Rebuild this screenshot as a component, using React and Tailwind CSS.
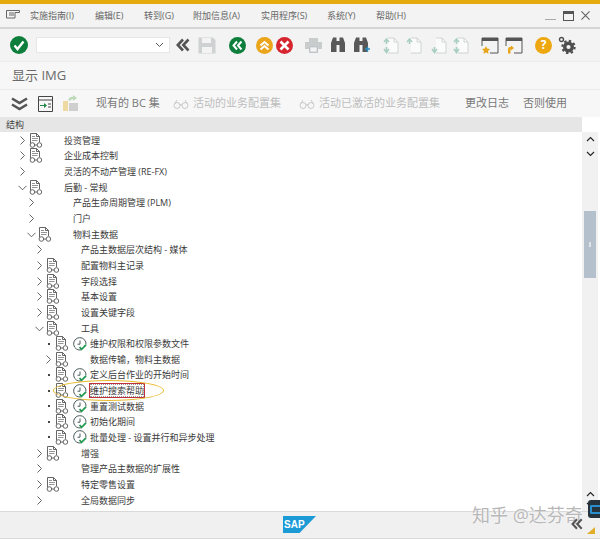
import React from "react";

const Chev = ({ open }) => (
  <svg width="9" height="9" viewBox="0 0 9 9" fill="none" stroke="#666" strokeWidth="1">
    {open ? <path d="M0.5 2.8 L4.5 6.8 L8.5 2.8" /> : <path d="M2.5 0.5 L6.5 4.5 L2.5 8.5" />}
  </svg>
);

const DocGlasses = () => (
  <svg width="14" height="15" viewBox="0 0 14 15" fill="none" stroke="#555" strokeWidth="0.9">
    <path d="M1.5 10.5 V0.5 H7.5 L10.5 3.5 V9" />
    <path d="M7.5 0.5 V3.5 H10.5" />
    <path d="M3 3.5 H6 M3 5.5 H9 M3 7.5 H8.5" stroke="#888" />
    <circle cx="3.4" cy="12" r="2.3" fill="#fff" />
    <circle cx="10.4" cy="12" r="2.3" fill="#fff" />
    <path d="M5.7 12 H8.1" />
  </svg>
);

const ClockCheck = () => (
  <svg width="14" height="14" viewBox="0 0 14 14" fill="none">
    <path d="M8.5 12.8 A6.2 6.2 0 1 1 13 7.5" stroke="#4a5a5a" strokeWidth="1" />
    <path d="M7 3.5 V7.2 H4.5" stroke="#4a5a5a" strokeWidth="1" />
    <path d="M6.5 10 L8.6 12.3 L13 7.8" stroke="#1f9a50" strokeWidth="1.8" />
  </svg>
);

const rows = [
  { t: "投资管理", l: 0, c: "r", i: 1 },
  { t: "企业成本控制", l: 0, c: "r", i: 1 },
  { t: "灵活的不动产管理 (RE-FX)", l: 0, c: "r" },
  { t: "后勤 - 常规", l: 0, c: "d", i: 1 },
  { t: "产品生命周期管理 (PLM)", l: 1, c: "r" },
  { t: "门户", l: 1, c: "r" },
  { t: "物料主数据", l: 1, c: "d", i: 1 },
  { t: "产品主数据层次结构 - 媒体", l: 2, c: "r" },
  { t: "配置物料主记录", l: 2, c: "r", i: 1 },
  { t: "字段选择", l: 2, c: "r", i: 1 },
  { t: "基本设置", l: 2, c: "r", i: 1 },
  { t: "设置关键字段", l: 2, c: "r", i: 1 },
  { t: "工具", l: 2, c: "d", i: 1 },
  { t: "维护权限和权限参数文件", l: 3, c: "b", i: 1, k: 1 },
  { t: "数据传输，物料主数据", l: 3, c: "r", i: 1 },
  { t: "定义后台作业的开始时间", l: 3, c: "b", i: 1, k: 1 },
  { t: "维护搜索帮助", l: 3, c: "b", i: 1, k: 1, sel: 1 },
  { t: "重置测试数据", l: 3, c: "b", i: 1, k: 1 },
  { t: "初始化期间", l: 3, c: "b", i: 1, k: 1 },
  { t: "批量处理 - 设置并行和异步处理", l: 3, c: "b", i: 1, k: 1 },
  { t: "增强", l: 2, c: "r", i: 1 },
  { t: "管理产品主数据的扩展性", l: 2, c: "r" },
  { t: "特定零售设置", l: 2, c: "r", i: 1 },
  { t: "全局数据同步", l: 2, c: "r" },
];

const indent = ["pl-[18px]", "pl-[27px]", "pl-[35px]", "pl-[44px]"];

const Row = ({ r }) => (
  <div className={`relative flex items-center h-[15.65px] shrink-0 ${indent[r.l]}`}>
    <span className="w-[9px] flex items-center justify-center shrink-0">
      {r.c === "r" && <Chev />}
      {r.c === "d" && <Chev open />}
      {r.c === "b" && <span className="w-[2px] h-[2px] bg-[#444]" />}
    </span>
    <span className="w-[18px] ml-[2px] flex shrink-0">{r.i ? <DocGlasses /> : null}</span>
    <span className="w-[17px] flex shrink-0">{r.k ? <ClockCheck /> : null}</span>
    <span
      className={`text-[9px] leading-[13px] text-[#3a3a3a] whitespace-nowrap ${
        r.sel ? "-ml-[1px] border border-[#c0303a] outline-1 outline-dotted -outline-offset-2 outline-[#999]" : ""
      }`}
    >
      {r.t}
    </span>
    {r.sel && (
      <span className="absolute left-[53px] top-[-3px] w-[111px] h-[21px] rounded-[50%] border-[1.5px] border-[#e8bb2e]" />
    )}
  </div>
);

const Round = ({ bg, children, className = "" }) => (
  <span className={`w-[17px] h-[17px] rounded-full flex items-center justify-center shrink-0 ${className}`} style={{ background: bg }}>
    <svg width="11" height="11" viewBox="0 0 11 11" fill="none" stroke="#fff" strokeWidth="2">
      {children}
    </svg>
  </span>
);

const DoubleLeft = ({ w = 14, h = 14, color = "#555", sw = 2.6 }) => (
  <svg width={w} height={h} viewBox="0 0 14 14" fill="none" stroke={color} strokeWidth={sw}>
    <path d="M7 1.5 L1.8 7 L7 12.5 M12.5 1.5 L7.3 7 L12.5 12.5" />
  </svg>
);

const Binoculars = ({ plus }) => (
  <svg width="18" height="18" viewBox="0 0 18 18">
    <path d="M2 7 L4 1.5 H7.5 V5 H10.5 V1.5 H14 L16 7 V16 H10.5 V9 H7.5 V16 H2 Z" fill="#585858" />
    {plus && <path d="M13 13 H18 M15.5 10.5 V16" stroke="#2f8fc4" strokeWidth="1.4" />}
  </svg>
);

const DocArrow = ({ up, down }) => (
  <svg width="16" height="17" viewBox="0 0 16 17" fill="none">
    <path d="M5 1 H11 L15 5 V16 H5" stroke="#d0d4d4" fill="#fbfbfb" />
    <path d="M11 1 V5 H15" stroke="#d0d4d4" />
    {up && <path d="M3.5 7 V2.5 M1 5 L3.5 2 L6 5" stroke="#a9cfc4" strokeWidth="1.6" />}
    {down && <path d="M3.5 10 V15 M1 12 L3.5 15.5 L6 12" stroke="#a9cfc4" strokeWidth="1.6" />}
  </svg>
);

const Win = ({ star }) => (
  <svg width="18" height="17" viewBox="0 0 18 17" fill="none">
    <path d="M1 1 H17 V16 H9" stroke="#555" strokeWidth="1" />
    <path d="M1 1 H17 V4 H1 Z" fill="#555" />
    <path d="M1 1 V9" stroke="#555" />
    {star ? (
      <path d="M5 9 L6.2 11.6 L9 12 L7 14 L7.5 16.8 L5 15.4 L2.5 16.8 L3 14 L1 12 L3.8 11.6 Z" fill="#e8a51a" />
    ) : (
      <path d="M3 16.5 V12 A2 2 0 0 1 5 10 H6 V8.5 L9 11 L6 13.5 V12 H5.5 V16.5 Z" fill="#e8a51a" />
    )}
  </svg>
);

const Glasses = () => (
  <svg width="16" height="10" viewBox="0 0 16 10" fill="none" stroke="#c9c9c9" strokeWidth="1" className="shrink-0">
    <circle cx="4" cy="6.5" r="3" />
    <circle cx="12" cy="6.5" r="3" />
    <path d="M7 6 Q8 5 9 6 M1.5 5 L4 1 M14.5 5 L12 1" />
  </svg>
);

const menus = [
  ["实施指南(I)", "w-[65px]"],
  ["编辑(E)", "w-[49px]"],
  ["转到(G)", "w-[49px]"],
  ["附加信息(A)", "w-[68px]"],
  ["实用程序(S)", "w-[66px]"],
  ["系统(Y)", "w-[49px]"],
  ["帮助(H)", "w-[40px]"],
];

const Arrow = ({ up }) => (
  <svg width="9" height="6" viewBox="0 0 9 6" fill="none" stroke="#222" strokeWidth="1.1">
    <path d={up ? "M1 5 L4.5 1.5 L8 5" : "M1 1 L4.5 4.5 L8 1"} />
  </svg>
);

export default function App() {
  return (
    <div className="relative w-[600px] h-[539px] overflow-hidden bg-[#f4f4f4] flex flex-col font-['Open_Sans','Noto_Sans_CJK_SC',sans-serif]">
      <div className="h-[4px] bg-[#e5aa0d] shrink-0" />

      <div className="h-[25px] shrink-0 flex items-center bg-[#f3f3f3] border-b-2 border-[#d4d4d4] pl-[6px]">
        <svg width="14" height="11" viewBox="0 0 14 11" fill="none" className="mr-[10px]">
          <path d="M0.5 0.5 H13.5 V2.5 H9 V8 H0.5 Z" stroke="#666" fill="none" />
          <path d="M3 3 H8 M3 5 H8" stroke="#666" />
        </svg>
        {menus.map(([m, w]) => (
          <span key={m} className={`${w} text-[9px] text-[#666] whitespace-nowrap`}>
            {m}
          </span>
        ))}
        <span className="ml-auto mr-[10px] flex items-center gap-[7px]">
          <span className="w-[11px] h-[1px] mt-[8px] bg-[#aaa]" />
          <span className="w-[11px] h-[10px] border border-[#555] border-t-[3px]" />
          <svg width="9" height="9" viewBox="0 0 10 10" stroke="#666" strokeWidth="1.3">
            <path d="M0.5 0.5 L9.5 9.5 M9.5 0.5 L0.5 9.5" />
          </svg>
        </span>
      </div>

      <div className="h-[33px] shrink-0 flex items-center bg-[#f3f3f3] pl-[10px] border-b border-[#ececec]">
        <span className="w-[18px] h-[18px] rounded-full bg-[#0d7e3c] flex items-center justify-center shrink-0">
          <svg width="12" height="11" viewBox="0 0 12 11" fill="none" stroke="#fff" strokeWidth="2.4">
            <path d="M1.5 5.5 L4.5 9 L10.5 1.5" />
          </svg>
        </span>
        <span className="ml-[8px] w-[134px] h-[16px] bg-white border border-[#e6e6e6] flex items-center justify-end pr-[5px] shrink-0">
          <svg width="9" height="6" viewBox="0 0 9 6" fill="none" stroke="#555" strokeWidth="1">
            <path d="M1 1 L4.5 4.5 L8 1" />
          </svg>
        </span>
        <span className="ml-[6px] flex"><DoubleLeft /></span>
        <svg width="18" height="17" viewBox="0 0 18 17" className="ml-[8px] shrink-0">
          <path d="M0.5 0.5 H15 L17.5 3 V16.5 H0.5 Z M4 1 V6 H13 V1 Z M4 10 V16 H14 V10 Z" fill="#cfd2d2" fillRule="evenodd" />
        </svg>
        <Round bg="#0d7e3c" className="ml-[13px]">
          <path d="M5 1.5 L1.5 5.5 L5 9.5 M9.5 1.5 L6 5.5 L9.5 9.5" />
        </Round>
        <Round bg="#eaa51b" className="ml-[10px]">
          <path d="M1.5 5.5 L5.5 2 L9.5 5.5 M1.5 9.5 L5.5 6 L9.5 9.5" />
        </Round>
        <Round bg="#d6252f" className="ml-[3px]">
          <path d="M1.5 1.5 L9.5 9.5 M9.5 1.5 L1.5 9.5" strokeWidth="2.6" />
        </Round>
        <svg width="17" height="15" viewBox="0 0 17 15" className="ml-[12px] shrink-0">
          <path d="M4 0 H13 V4 H17 V11 H13 V15 H4 V11 H0 V4 H4 Z" fill="#c8cccc" />
          <path d="M5 9 H12 V14 H5 Z" fill="#f3f3f3" stroke="#aab" strokeWidth="0.5" />
        </svg>
        <span className="ml-[7px] flex shrink-0"><Binoculars /></span>
        <span className="ml-[5px] flex shrink-0"><Binoculars plus /></span>
        <span className="ml-[13px] flex shrink-0"><DocArrow up down /></span>
        <span className="ml-[7px] flex shrink-0"><DocArrow up /></span>
        <span className="ml-[9px] flex shrink-0"><DocArrow down /></span>
        <span className="ml-[6px] flex shrink-0"><DocArrow up down /></span>
        <span className="ml-[12px] flex shrink-0"><Win star /></span>
        <span className="ml-[6px] flex shrink-0"><Win /></span>
        <span className="ml-[12px] w-[17px] h-[17px] rounded-full bg-[#eda70f] text-white text-[12px] font-bold flex items-center justify-center shrink-0">?</span>
        <svg width="18" height="18" viewBox="0 0 18 18" className="ml-[6px] shrink-0">
          <circle cx="10.5" cy="11" r="3.8" fill="none" stroke="#4d4d4d" strokeWidth="3.4" />
          <circle cx="10.5" cy="11" r="6.2" fill="none" stroke="#4d4d4d" strokeWidth="2" strokeDasharray="2.4 2.4" />
          <circle cx="3.5" cy="3.5" r="2" fill="none" stroke="#4d4d4d" strokeWidth="1.4" />
        </svg>
      </div>

      <div className="h-[28px] shrink-0 flex items-center bg-[#f7f7f7] border-b border-[#ebebeb] pl-[12px] text-[13px] text-[#6a6a6a]">
        显示 IMG
      </div>

      <div className="h-[27px] shrink-0 flex items-center bg-[#f7f7f7] pl-[11px] text-[11px] text-[#777] whitespace-nowrap">
        <svg width="17" height="14" viewBox="0 0 17 14" fill="none" stroke="#555" strokeWidth="2.6" className="shrink-0">
          <path d="M1 1.5 L8.5 6 L16 1.5 M1 7.5 L8.5 12 L16 7.5" />
        </svg>
        <svg width="15" height="16" viewBox="0 0 15 16" fill="none" className="ml-[10px] shrink-0">
          <path d="M0.5 0.5 H14.5 V15.5 H0.5 Z M0.5 4 H14.5" stroke="#444" />
          <path d="M2 9 H6 V7 L9 9.5 L6 12 V10 H2 Z" fill="#1d8a46" />
          <path d="M10 8 H13 M10 11 H13" stroke="#444" />
        </svg>
        <svg width="16" height="17" viewBox="0 0 16 17" className="ml-[10px] shrink-0">
          <path d="M0 6 H5 V16 H0 Z" fill="#eed9a0" />
          <path d="M6 8 H15 V16 H6 Z" fill="#cfcfcf" />
          <path d="M5 5 Q7 1 10 2 V0 L14 3 L10 6 V4 Q8 4 7 6 Z" fill="#bcd9b8" />
        </svg>
        <span className="ml-[17px] w-[77px]">现有的 BC 集</span>
        <Glasses />
        <span className="ml-[4px] w-[106px] text-[#bdbdbd]">活动的业务配置集</span>
        <Glasses />
        <span className="ml-[4px] w-[146px] text-[#bdbdbd]">活动已激活的业务配置集</span>
        <span className="w-[58px]">更改日志</span>
        <span>否则使用</span>
      </div>

      <div className="flex-1 min-h-0 flex bg-white pl-[3px]">
        <div className="flex-1 min-w-0 flex flex-col">
          <div className="h-[15px] shrink-0 bg-[#e6e6e6] -ml-[3px] pl-[6px] flex items-center text-[9px] text-[#444]">结构</div>
          <div className="flex-1 flex flex-col overflow-hidden -ml-[3px] pt-[0.5px]">
            {rows.map((r) => (
              <Row key={r.t} r={r} />
            ))}
          </div>
        </div>
        <div className="w-[16px] shrink-0 mr-[2px] flex flex-col">
          <div className="h-[15px] bg-white shrink-0" />
          <div className="flex-1 bg-[#f1f1f1] relative flex flex-col items-center">
            <span className="mt-[4px] flex"><Arrow up /></span>
            <span className="mt-[9px] flex"><Arrow /></span>
            <div className="mt-[54px] w-[12px] h-[67px] bg-[#b4c0cb] flex items-center justify-center">
              <span className="w-[2px] h-[5px] bg-[#dfe4e8]" />
            </div>
            <span className="mt-auto mb-[5px] flex"><Arrow up /></span>
            <span className="mb-[3px] flex"><Arrow /></span>
          </div>
        </div>
      </div>

      <div className="h-[28px] shrink-0 bg-[#f0f0f0] border-t border-b border-[#d9d9d9] flex items-center justify-center">
        <svg width="33" height="17" viewBox="0 0 33 17" className="-mt-[2px] mr-[2px]">
          <path d="M0 0 H33 L16.5 17 H0 Z" fill="#1b9ad6" />
          <text x="1" y="12" fontSize="10" fontWeight="700" fill="#fff" fontFamily="Liberation Sans">SAP</text>
        </svg>
      </div>

      <div className="absolute left-[472px] top-[503px] text-[18px] leading-[24px] text-[#b8b8b8] whitespace-nowrap [text-shadow:0_0_2px_#fff]">
        知乎 @达芬奇
      </div>
      <div className="absolute left-[588px] top-[500px] w-[14px] h-[18px] rounded-l-[3px] bg-[#26333d] flex items-center pl-[2px]">
        <span className="w-[12px] h-[9px] rounded-[1px] border-2 border-[#2a8fcf]" />
      </div>
      <div className="absolute left-[571px] top-[518px] flex"><DoubleLeft w={12} h={12} color="#555" sw={2.4} /></div>
      <svg width="8" height="7" viewBox="0 0 8 7" className="absolute left-[587px] top-[527px]">
        <path d="M8 0 V7 H0 Z" fill="#e2ae2a" />
      </svg>
    </div>
  );
}
